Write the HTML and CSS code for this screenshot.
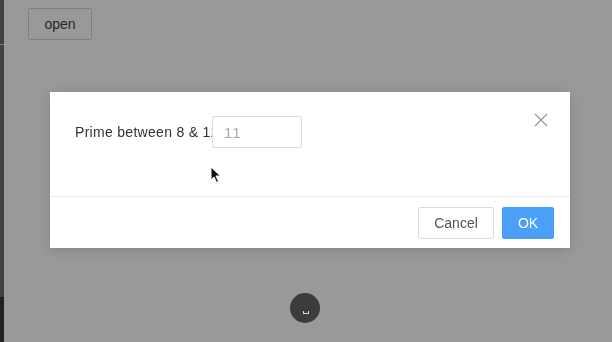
FILE: index.html
```html
<!DOCTYPE html>
<html lang="en">
<head>
  <meta charset="UTF-8">
  <title>Prompt Modal</title>
  <meta name="viewport" content="width=device-width, initial-scale=1.0">
  <link rel="stylesheet" href="styles.css">
</head>
<body>

  <div id="page">
    <div class="edge">
      <span class="edge-top"></span>
      <span class="edge-line"></span>
      <span class="edge-mid"></span>
      <span class="edge-bottom"></span>
    </div>
    <div class="main">
      <button class="open-btn">open</button>
    </div>
  </div>

  <div class="overlay">
    <div class="modal">
      <div class="modal-body">
        <label class="prompt-label" for="answer">Prime between 8 &amp; 12</label>
        <input class="prompt-input" id="answer" type="text" value="11">
        <span class="close">
          <svg width="14" height="14" viewBox="0 0 14 14"><path d="M1 1 L13 13 M13 1 L1 13" stroke="#999" stroke-width="1.3" fill="none"/></svg>
        </span>
      </div>
      <div class="modal-footer">
        <button class="btn">Cancel</button>
        <button class="btn btn-primary">OK</button>
      </div>
    </div>
    <div class="spinner"><span class="spinner-mark"></span></div>
    <!-- mouse pointer from the capture -->
    <svg class="cursor" width="12" height="18" viewBox="0 0 12 18"><path d="M1 1 L1 14 L4 11 L6.5 16.5 L8.5 15.5 L6 10 L10.5 10 Z" fill="#111" stroke="#fff" stroke-width="1"/></svg>
  </div>

</body>
</html>
```

FILE: styles.css
```css
html, body {
  margin: 0;
  padding: 0;
  height: 100%;
  overflow: hidden;
  font-family: "Liberation Sans", Arial, sans-serif;
}
#page {
  display: flex;
  height: 100%;
  background-color: #fff;
}
.edge {
  display: flex;
  flex-direction: column;
  width: 4px;
}
.edge-top {
  height: 44px;
  background-color: #6e6e6e;
}
.edge-line {
  height: 1px;
  background-color: #d0d0d0;
}
.edge-mid {
  height: 252px;
  background-color: #6e6e6e;
}
.edge-bottom {
  flex: 1;
  background-color: #373737;
}
.main {
  flex: 1;
  padding: 8px 0 0 24px;
}
.open-btn {
  width: 64px;
  height: 32px;
  background: #fff;
  border: 1px solid #d4d4d4;
  border-radius: 2px;
  color: #444;
  font-family: inherit;
  font-size: 14px;
}
.overlay {
  position: fixed;
  top: 0;
  left: 0;
  right: 0;
  bottom: 0;
  background-color: rgba(0,0,0,0.4);
  padding-top: 92px;
}
.modal {
  width: 520px;
  margin-left: 50px;
  background: #fff;
  box-shadow: 0 2px 12px rgba(0,0,0,0.15);
}
.modal-body {
  position: relative;
  display: flex;
  align-items: flex-start;
  height: 105px;
  padding: 24px 25px 0;
  box-sizing: border-box;
  border-bottom: 1px solid #ececec;
}
.prompt-label {
  width: 137px;
  height: 32px;
  line-height: 32px;
  overflow: hidden;
  white-space: nowrap;
  font-size: 14px;
  letter-spacing: 0.3px;
  color: #333;
}
.prompt-input {
  width: 90px;
  height: 32px;
  box-sizing: border-box;
  border: 1px solid #dcdcdc;
  border-radius: 2px;
  padding: 0 11px;
  font-family: inherit;
  font-size: 15px;
  letter-spacing: 1px;
  color: #aaa;
  outline: none;
}
.close {
  position: absolute;
  top: 21px;
  right: 22px;
}
.modal-footer {
  display: flex;
  justify-content: flex-end;
  gap: 8px;
  height: 51px;
  padding: 10px 16px 0 0;
  box-sizing: border-box;
}
.btn {
  height: 32px;
  width: 76px;
  padding: 0;
  background: #fff;
  border: 1px solid #dcdcdc;
  border-radius: 2px;
  color: #555;
  font-family: inherit;
  font-size: 14px;
}
.btn-primary {
  width: 52px;
  background: #4a9ff9;
  border-color: #4a9ff9;
  color: #fff;
}
.spinner {
  position: relative;
  width: 30px;
  height: 30px;
  margin: 45px 0 0 290px;
  border-radius: 50%;
  background: #3c3c3c;
}
.spinner-mark {
  position: absolute;
  left: 13px;
  top: 18px;
  width: 4px;
  height: 2px;
  border: 1px solid #ddd;
  border-top: none;
}
.cursor {
  position: absolute;
  left: 210px;
  top: 166px;
}
```
